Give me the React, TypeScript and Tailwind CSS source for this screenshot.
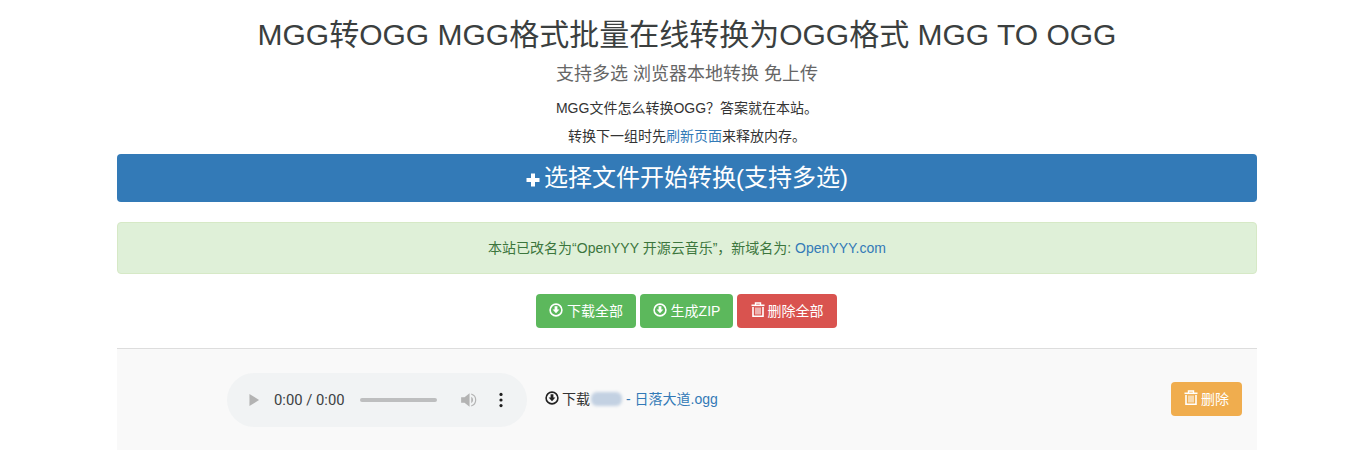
const FONT = "font-['Liberation_Sans','Noto_Sans_CJK_SC',sans-serif]";

function DownloadIcon({ className }: { className?: string }) {
  return (
    <svg viewBox="0 0 14 14" className={className} fill="none">
      <circle cx="7" cy="7" r="5.9" stroke="currentColor" strokeWidth="1.6" />
      <path d="M5.6 3.2h2.8v3.4h2L7 10.2 3.6 6.6h2z" fill="currentColor" />
    </svg>
  );
}

function TrashIcon({ className }: { className?: string }) {
  return (
    <svg viewBox="0 0 14 15" className={className} fill="none" stroke="currentColor">
      <path d="M0.5 3.3h13" strokeWidth="1.6" />
      <path d="M4.5 3V1h5v2" strokeWidth="1.4" />
      <path d="M2 5v9.2h10V5" strokeWidth="1.6" />
      <path d="M5 5.5v7M7 5.5v7M9 5.5v7" strokeWidth="1.1" />
    </svg>
  );
}

export default function App() {
  return (
    <div className={`${FONT} w-[1361px] h-[451px] overflow-hidden bg-white text-[#333] text-[14px] leading-[20px]`}>
      <div className="ml-[117px] w-[1140px]">
        <h2 className="pt-[18px] text-center text-[30px] leading-[33px] text-[#3b3f3f]">
          MGG转OGG MGG格式批量在线转换为OGG格式 MGG TO OGG
        </h2>
        <h4 className="mt-[13px] text-center text-[18px] leading-[20px] text-[#666]">支持多选 浏览器本地转换 免上传</h4>
        <p className="mt-[14px] text-center">MGG文件怎么转换OGG？答案就在本站。</p>
        <p className="mt-[8px] text-center">
          转换下一组时先<a className="text-[#337ab7]">刷新页面</a>来释放内存。
        </p>

        <button className="mt-[8px] flex h-[48px] w-full items-center justify-center rounded-[4px] bg-[#337ab7] text-[24px] text-white">
          <svg viewBox="0 0 14 14" className="mr-[4px] mt-[3px] h-[14px] w-[14px]" fill="currentColor">
            <path d="M5 0.5h4v4.5h4.5v4H9v4.5H5V9H0.5V5H5z" />
          </svg>
          选择文件开始转换(支持多选)
        </button>

        <div className="mt-[20px] flex h-[52px] items-center justify-center rounded-[4px] border border-[#d6e9c6] bg-[#dff0d8] text-[#3c763d]">
          本站已改名为“OpenYYY 开源云音乐”，新域名为:&nbsp;<a className="text-[#337ab7]">OpenYYY.com</a>
        </div>

        <div className="mr-[1px] mt-[20px] flex justify-center gap-[4px] text-white">
          <button className="flex h-[34px] w-[100px] items-center justify-center gap-[4px] rounded-[4px] bg-[#5cb85c]">
            <DownloadIcon className="mb-[3px] h-[14px] w-[14px]" />下载全部
          </button>
          <button className="flex h-[34px] w-[93px] items-center justify-center gap-[4px] rounded-[4px] bg-[#5cb85c]">
            <DownloadIcon className="mb-[3px] h-[14px] w-[14px]" />生成ZIP
          </button>
          <button className="flex h-[34px] w-[100px] items-center justify-center gap-[3px] rounded-[4px] bg-[#d9534f]">
            <TrashIcon className="mb-[3px] h-[15px] w-[14px]" />删除全部
          </button>
        </div>

        <div className="mt-[20px] flex h-[102px] items-center border-t border-[#ddd] bg-[#f9f9f9] pl-[110px] pr-[15px]">
          <div className="mt-[1px] flex h-[54px] w-[300px] items-center rounded-[27px] bg-[#f1f3f4] text-[#3c4043]">
            <svg viewBox="0 0 12 14" className="ml-[22px] h-[14px] w-[11px]" fill="#b3b3b3">
              <path d="M0.5 0.5L11 7 0.5 13.5z" />
            </svg>
            <span className="ml-[14px] w-[70px] whitespace-nowrap font-['Roboto',sans-serif] text-[14.8px]">0:00 / 0:00</span>
            <span className="ml-[16px] h-[4px] w-[77px] rounded-full bg-[#bdbebf]" />
            <svg viewBox="0 0 16 16" className="ml-[23px] h-[18px] w-[18px]" fill="#b3b3b3">
              <path d="M1 5.5h3L8.5 2v12L4 10.5H1z" />
              <path d="M10 5.2a3.2 3.2 0 010 5.6z" />
              <path d="M10 2.2v1.2a4.8 4.8 0 010 9.2v1.2a6 6 0 000-11.6z" />
            </svg>
            <svg viewBox="0 0 4 16" className="ml-[21px] h-[16px] w-[4px]" fill="#1f1f1f">
              <circle cx="2" cy="2.4" r="1.6" />
              <circle cx="2" cy="8" r="1.6" />
              <circle cx="2" cy="13.6" r="1.6" />
            </svg>
          </div>
          <DownloadIcon className="mb-[3px] ml-[18px] h-[14px] w-[14px] text-[#222]" />
          <span className="mb-[1px] ml-[3px]">下载</span>
          <span className="mb-[1px] ml-[1px] h-[14px] w-[31px] rounded-[6px] bg-[#c3d1e2] blur-[1.5px]" />
          <a className="mb-[1px] ml-[4px] text-[#337ab7]">- 日落大道.ogg</a>
          <button className="mb-[1px] ml-auto flex h-[34px] w-[71px] items-center justify-center gap-[3px] rounded-[4px] bg-[#f0ad4e] text-white">
            <TrashIcon className="mb-[3px] h-[15px] w-[14px]" />删除
          </button>
        </div>
      </div>
    </div>
  );
}
